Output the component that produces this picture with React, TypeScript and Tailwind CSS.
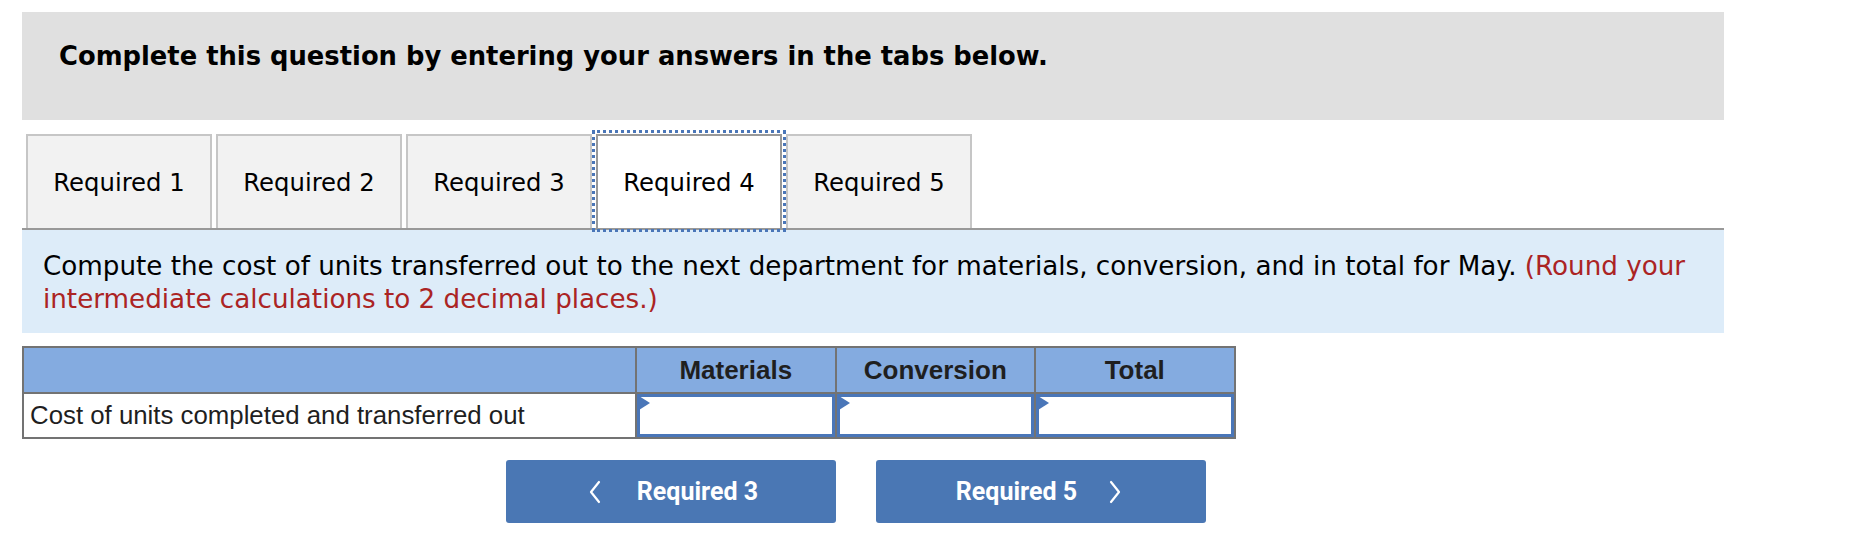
import React from "react";

const tabs = ["Required 1", "Required 2", "Required 3", "Required 4", "Required 5"];
const cols = ["Materials", "Conversion", "Total"];

function Chevron({ dir }: { dir: "left" | "right" }) {
  return (
    <svg width="14" height="24" viewBox="0 0 14 24" fill="none">
      <polyline
        points={dir === "left" ? "11,2 3,12 11,22" : "3,2 11,12 3,22"}
        stroke="white"
        strokeWidth="2.2"
        strokeLinecap="round"
        strokeLinejoin="round"
      />
    </svg>
  );
}

export default function App() {
  return (
    <div className="min-h-screen bg-white">
      <div className="ml-[22px] w-[1702px] pt-[12px]">
        {/* instructions */}
        <div className="h-[108px] bg-[#e0e0e0] pl-[37px] pt-[28px]">
          <h1 className="font-['DejaVu_Sans',sans-serif] text-[25.8px] font-bold leading-[32px] text-black">
            Complete this question by entering your answers in the tabs below.
          </h1>
        </div>

        {/* tabs */}
        <div className="mt-[14px] flex gap-[4px] border-b-2 border-[#999999] pl-[4px]">
          {tabs.map((t, i) =>
            i === 3 ? (
              <div
                key={t}
                className="flex h-[94px] w-[186px] items-center justify-center border-2 border-b-0 border-[#999999] bg-white pt-[2px] font-['DejaVu_Sans',sans-serif] text-[24.3px] text-black outline-[3px] outline-offset-[1px] outline-[#4a76b8] outline-dotted"
              >
                {t}
              </div>
            ) : (
              <div
                key={t}
                className="flex h-[94px] w-[186px] items-center justify-center border-2 border-b-0 border-[#c6c6c6] bg-[#f2f2f2] pt-[2px] font-['DejaVu_Sans',sans-serif] text-[24.3px] text-black"
              >
                {t}
              </div>
            )
          )}
        </div>

        {/* question */}
        <div className="h-[103px] bg-[#ddecf9] pl-[21px] pr-[12px] pt-[20px] font-['DejaVu_Sans',sans-serif] text-[26.2px] leading-[33px] text-black">
          Compute the cost of units transferred out to the next department for materials, conversion, and in total for May.{" "}
          <span className="text-[#ab2424]">(Round your intermediate calculations to 2 decimal places.)</span>
        </div>

        {/* answer table */}
        <table className="mt-[13px] border-collapse font-['Liberation_Sans',Arial,sans-serif]">
          <thead>
            <tr className="h-[46px] bg-[#84abe0]">
              <th className="w-[613px] border-2 border-[#737373] p-0"></th>
              {cols.map((c) => (
                <th
                  key={c}
                  className="w-[199.5px] border-2 border-[#737373] p-0 text-center text-[26px] font-bold text-[#1f1f1f]"
                >
                  {c}
                </th>
              ))}
            </tr>
          </thead>
          <tbody>
            <tr className="h-[45px]">
              <td className="border-2 border-[#737373] pl-[6px] text-left text-[25.8px] text-[#1f1f1f]">
                Cost of units completed and transferred out
              </td>
              {cols.map((c) => (
                <td key={c} className="border-2 border-[#737373] p-0">
                  <div className="relative h-[43px] w-full border-[3px] border-[#4a76b8] bg-white">
                    <span className="absolute left-[-1px] top-[-1px] h-0 w-0 border-y-[7px] border-l-[11px] border-y-transparent border-l-[#4a76b8]" />
                  </div>
                </td>
              ))}
            </tr>
          </tbody>
        </table>

        {/* navigation */}
        <div className="ml-[484px] mt-[21px] flex gap-[40px] font-['Roboto',sans-serif] text-[25px] font-bold text-white">
          <button className="flex h-[63px] w-[330px] items-center justify-center gap-[35px] rounded-[3px] bg-[#4a77b4] pl-[4px]">
            <Chevron dir="left" />
            <span>Required 3</span>
          </button>
          <button className="flex h-[63px] w-[330px] items-center justify-center gap-[31px] rounded-[3px] bg-[#4a77b4] pr-[4px]">
            <span>Required 5</span>
            <Chevron dir="right" />
          </button>
        </div>
      </div>
    </div>
  );
}
